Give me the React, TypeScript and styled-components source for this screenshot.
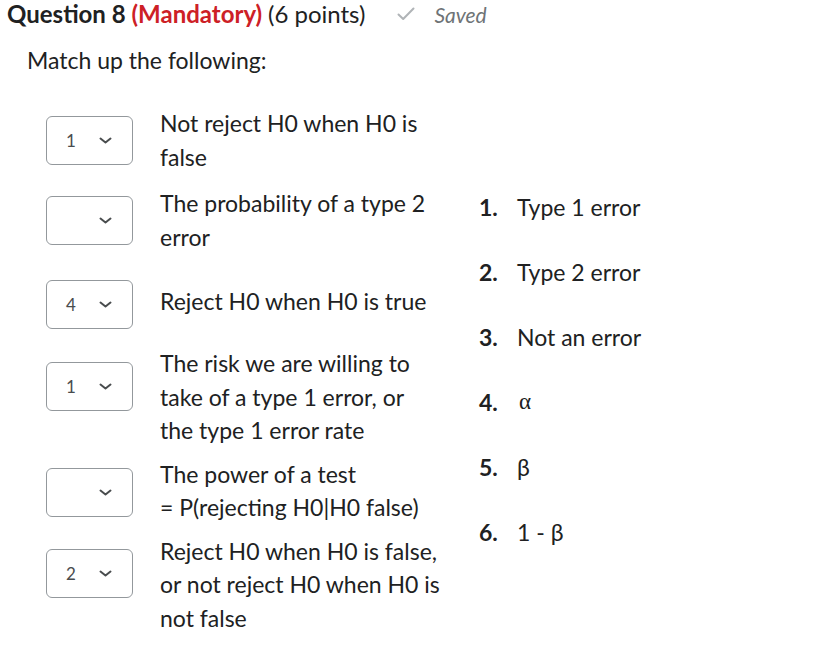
import React from "react";
import styled, { createGlobalStyle } from "styled-components";

const Global = createGlobalStyle`
  html, body { margin: 0; padding: 0; background: #ffffff; }
  body { font-family: Lato, "Noto Sans", sans-serif; color: #202122; }
`;

const Page = styled.div`
  width: 824px;
  height: 655px;
  overflow: hidden;
  box-sizing: border-box;
`;

const Header = styled.div`
  display: flex;
  align-items: center;
  padding-left: 7px;
  height: 28px;
`;

const Title = styled.h2`
  margin: 0;
  font-size: 24px;
  line-height: 28px;
  font-weight: 700;
  color: #202122;
  white-space: nowrap;
`;

const Mandatory = styled.span`
  color: #cd2026;
`;

const Points = styled.span`
  font-weight: 400;
`;

const SavedBox = styled.div`
  display: flex;
  align-items: center;
  gap: 19px;
  margin-left: 32px;
  color: #6e7376;
  font-style: italic;
  font-size: 21px;
`;

const Prompt = styled.p`
  margin: 18px 0 0 27px;
  font-size: 23px;
  line-height: 28px;
`;

const Matching = styled.div`
  display: flex;
  align-items: center;
  margin-left: 46px;
  margin-top: 33px;
`;

const Rows = styled.div`
  display: flex;
  flex-direction: column;
`;

const Row = styled.div<{ $mt: number }>`
  display: flex;
  align-items: flex-start;
  margin-top: ${(p) => p.$mt}px;
`;

const Select = styled.div<{ $mt: number }>`
  box-sizing: border-box;
  width: 87px;
  height: 49px;
  margin-top: ${(p) => p.$mt}px;
  border: 1px solid #93989c;
  border-radius: 6px;
  display: flex;
  align-items: center;
  padding-left: 19px;
  padding-right: 20px;
  font-size: 17px;
  color: #494c4e;
  flex-shrink: 0;
`;

const SelectValue = styled.span`
  flex: 1;
`;

const RowText = styled.div<{ $mt: number }>`
  width: 300px;
  margin-left: 27px;
  margin-top: ${(p) => p.$mt}px;
  font-size: 23px;
  line-height: 33.5px;
`;

const Choices = styled.ol`
  list-style: none;
  margin: -4px 0 0 19px;
  padding: 0;
  display: flex;
  flex-direction: column;
`;

const Choice = styled.li`
  display: flex;
  align-items: center;
  height: 65px;
  font-size: 23px;
`;

const ChoiceNum = styled.span`
  width: 38px;
  font-weight: 700;
  color: #202122;
`;

const Symbol = styled.span<{ $serif?: boolean }>`
  font-family: ${(p) => (p.$serif ? '"Liberation Serif", serif' : 'Lato, "Noto Sans", sans-serif')};
  padding-left: ${(p) => (p.$serif ? "2px" : "0")};
`;

const Check = () => (
  <svg width="18" height="14" viewBox="0 0 18 14" fill="none">
    <path d="M1.5 7.5 L6.2 12 L16.5 1.5" stroke="#b0b4b7" strokeWidth="2" strokeLinecap="round" strokeLinejoin="round" />
  </svg>
);

const Chevron = () => (
  <svg width="13" height="7" viewBox="0 0 13 7" fill="none">
    <path d="M1.5 1.5 L6.5 5.5 L11.5 1.5" stroke="#494c4e" strokeWidth="2" strokeLinecap="round" strokeLinejoin="round" />
  </svg>
);

const rows = [
  { mt: 0, sel: 9, txt: 0, value: "1", lines: ["Not reject H0 when H0 is", "false"] },
  { mt: 13, sel: 9, txt: 0, value: "", lines: ["The probability of a type 2", "error"] },
  { mt: 26, sel: 0, txt: 5, value: "4", lines: ["Reject H0 when H0 is true"] },
  { mt: 18, sel: 15, txt: 0, value: "1", lines: ["The risk we are willing to", "take of a type 1 error, or", "the type 1 error rate"] },
  { mt: 10, sel: 10, txt: 0, value: "", lines: ["The power of a test", "= P(rejecting H0|H0 false)"] },
  { mt: 10, sel: 14, txt: 0, value: "2", lines: ["Reject H0 when H0 is false,", "or not reject H0 when H0 is", "not false"] },
];

const choices = [
  { text: "Type 1 error" },
  { text: "Type 2 error" },
  { text: "Not an error" },
  { text: "α", serif: true },
  { text: "β" },
  { text: "1 - β" },
];

export default function App() {
  return (
    <Page>
      <Global />
      <Header>
        <Title>
          Question 8 <Mandatory>(Mandatory)</Mandatory> <Points>(6 points)</Points>
        </Title>
        <SavedBox>
          <Check />
          <span>Saved</span>
        </SavedBox>
      </Header>
      <Prompt>Match up the following:</Prompt>
      <Matching>
        <Rows>
          {rows.map((r, i) => (
            <Row key={i} $mt={r.mt}>
              <Select $mt={r.sel}>
                <SelectValue>{r.value}</SelectValue>
                <Chevron />
              </Select>
              <RowText $mt={r.txt}>
                {r.lines.map((l, j) => (
                  <div key={j}>{l}</div>
                ))}
              </RowText>
            </Row>
          ))}
        </Rows>
        <Choices>
          {choices.map((c, i) => (
            <Choice key={i}>
              <ChoiceNum>{i + 1}.</ChoiceNum>
              <Symbol $serif={c.serif}>{c.text}</Symbol>
            </Choice>
          ))}
        </Choices>
      </Matching>
    </Page>
  );
}
